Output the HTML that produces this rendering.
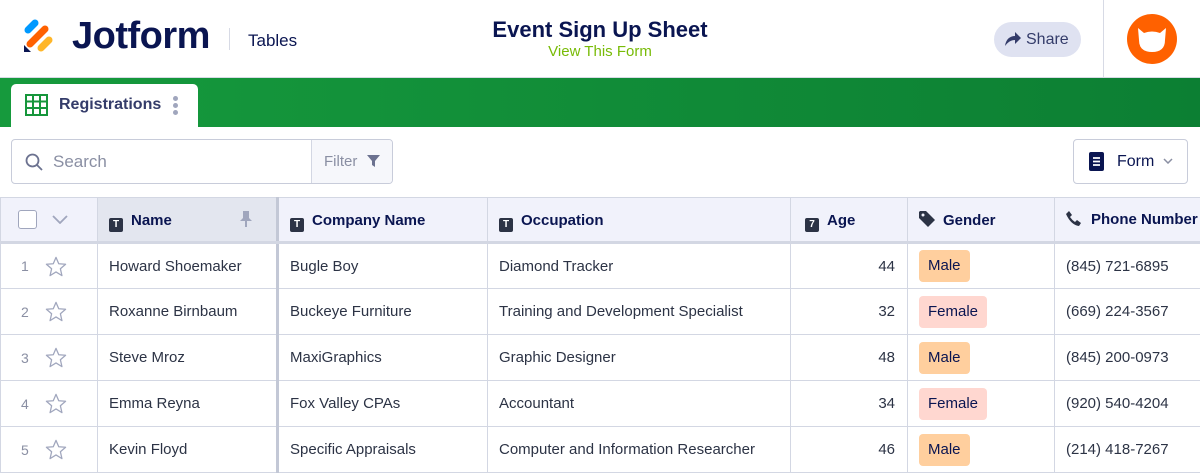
<!DOCTYPE html>
<html><head><meta charset="utf-8"><style>
*{box-sizing:border-box;margin:0;padding:0}
body{width:1200px;height:474px;overflow:hidden;background:#fff;font-family:"Liberation Sans",sans-serif;color:#0a1551;position:relative}
.hdr{position:absolute;left:0;top:0;width:1200px;height:78px;border-bottom:1px solid #d7dae5;background:#fff}
.abs{position:absolute}
.green{position:absolute;top:78px;left:0;width:1200px;height:49px;background:linear-gradient(90deg,#169a3d,#0c7f33)}
.tab{position:absolute;left:11px;top:84px;width:187px;height:43px;background:#fff;border-radius:5px 5px 0 0}
table{position:absolute;left:0;top:197px;border-collapse:collapse;table-layout:fixed;width:1210px}
td,th{border:1px solid #d3d7e3;height:46px;font-size:15px;color:#2c3345;font-weight:normal;text-align:left;padding:0 0 0 11px;white-space:nowrap;overflow:hidden;vertical-align:middle}
th{background:#f1f2fb;color:#0a1551;font-weight:bold;height:45px;border-bottom:3px solid #d3d7e3;padding-top:4px}
.ic{display:inline-block;width:14px;height:14px;background:#2c3345;color:#fff;font-size:10px;text-align:center;line-height:14px;border-radius:2px;margin-right:8px;vertical-align:-2px;font-weight:bold}
.tag{display:inline-block;padding:0 9px;height:32px;line-height:32px;border-radius:4px;color:#0a1551}
.m{background:#ffcf9e}.f{background:#ffd7d0}
.num{display:inline-block;width:12px;color:#8a8fa3;font-size:14px;vertical-align:middle}
.st{display:inline-block;margin-left:12px;vertical-align:middle}
</style></head><body>
<div class="hdr">
 <svg class="abs" style="left:20px;top:17px" width="36" height="36" viewBox="0 0 36 36">
  <path d="M8 13L15 6" stroke="#0099ff" stroke-width="7" stroke-linecap="round"/>
  <path d="M10 27L25 12" stroke="#ff6100" stroke-width="7" stroke-linecap="round"/>
  <path d="M21 31L29 23" stroke="#ffb629" stroke-width="7" stroke-linecap="round"/>
  <path d="M4 28L4 35L11 35Z" fill="#0a1551"/>
 </svg>
 <div class="abs" style="left:72px;top:15px;font-size:38px;font-weight:bold;color:#0a1551;letter-spacing:-0.5px">Jotform</div>
 <div class="abs" style="left:229px;top:28px;width:1px;height:22px;background:#d7dae5"></div>
 <div class="abs" style="left:248px;top:31px;font-size:17px;color:#0a1551">Tables</div>
 <div class="abs" style="left:450px;top:17px;width:300px;text-align:center;font-size:22px;font-weight:bold;color:#0a1551">Event Sign Up Sheet</div>
 <div class="abs" style="left:450px;top:43px;width:300px;text-align:center;font-size:15px;color:#78bb07">View This Form</div>
 <div class="abs" style="left:994px;top:22px;width:87px;height:35px;border-radius:18px;background:#dfe2f1;font-size:16px;color:#343c6a;line-height:35px;padding-left:32px">Share</div>
 <svg class="abs" style="left:1004px;top:31px" width="18" height="16" viewBox="0 0 18 16"><path d="M1 15 C2 8 6 5 11 5 V1 L17 7 L11 13 V9 C7 9 4 11 1 15Z" fill="#343c6a"/></svg>
 <div class="abs" style="left:1103px;top:0;width:1px;height:78px;background:#d7dae5"></div>
 <svg class="abs" style="left:1127px;top:14px" width="50" height="50" viewBox="0 0 50 50"><circle cx="25" cy="25" r="25" fill="#ff6100"/><path d="M11 14 L17 19 Q25 16 33 19 L39 14 L38 26 Q38 38 25 38 Q12 38 12 26Z" fill="#fff"/></svg>
</div>
<div class="green"></div>
<div class="tab">
 <svg class="abs" style="left:14px;top:10px" width="23" height="22" viewBox="0 0 23 22"><rect x="1" y="1" width="21" height="20" fill="none" stroke="#16963b" stroke-width="2"/><path d="M8 1V21M15 1V21M1 7.5H22M1 14H22" stroke="#16963b" stroke-width="2"/></svg>
 <div class="abs" style="left:48px;top:12px;font-size:16px;font-weight:bold;color:#343c6a">Registrations</div>
 <div class="abs" style="left:162px;top:12px;width:5px;font-size:0">
  <div style="width:5px;height:5px;border-radius:50%;background:#a0a6bd;margin-bottom:2px"></div><div style="width:5px;height:5px;border-radius:50%;background:#a0a6bd;margin-bottom:2px"></div><div style="width:5px;height:5px;border-radius:50%;background:#a0a6bd"></div>
 </div>
</div>
<div class="abs" style="left:11px;top:139px;width:382px;height:45px;border:1px solid #c8ccda;border-radius:4px;overflow:hidden">
 <svg class="abs" style="left:13px;top:13px" width="18" height="18" viewBox="0 0 18 18"><circle cx="7.5" cy="7.5" r="6" fill="none" stroke="#6c7290" stroke-width="1.8"/><path d="M12 12L17 17" stroke="#6c7290" stroke-width="1.8"/></svg>
 <div class="abs" style="left:41px;top:12px;font-size:17px;color:#8a8fa3">Search</div>
 <div class="abs" style="left:299px;top:0;width:82px;height:43px;background:#f6f7fb;border-left:1px solid #d3d7e3;font-size:15px;color:#8a8fa3;line-height:43px;padding-left:12px">Filter</div>
 <svg class="abs" style="left:355px;top:15px" width="13" height="13" viewBox="0 0 13 13"><path d="M0 0H13L8 6V12L5 10V6Z" fill="#6c7290"/></svg>
</div>
<div class="abs" style="left:1073px;top:139px;width:115px;height:45px;border:1px solid #c8ccda;border-radius:4px">
 <svg class="abs" style="left:15px;top:12px" width="15" height="19" viewBox="0 0 15 19"><rect width="15" height="19" rx="2" fill="#0a1551"/><path d="M4 6H11M4 9.5H11M4 13H11" stroke="#fff" stroke-width="1.8"/></svg>
 <div class="abs" style="left:43px;top:13px;font-size:16px;color:#0a1551">Form</div>
 <svg class="abs" style="left:89px;top:18px" width="10" height="6" viewBox="0 0 10 6"><path d="M1 1L5 5L9 1" fill="none" stroke="#8a8fa3" stroke-width="1.5"/></svg>
</div>
<svg class="abs" style="left:240px;top:211px;z-index:2" width="12" height="16" viewBox="0 0 12 16"><path d="M3 0H9V7L12 10H7V16H5V10H0L3 7Z" fill="#a0a6bd"/></svg>
<table>
<colgroup><col style="width:97px"><col style="width:180px"><col style="width:210px"><col style="width:303px"><col style="width:117px"><col style="width:147px"><col style="width:156px"></colgroup>
<tr><th style="padding-left:17px;padding-top:0"><span style="display:inline-block;width:19px;height:19px;border:1.5px solid #a0a6bd;border-radius:3px;background:#fff;vertical-align:middle"></span><svg style="margin-left:15px;vertical-align:middle" width="16" height="9" viewBox="0 0 16 9"><path d="M1 1L8 8L15 1" fill="none" stroke="#a0a6bd" stroke-width="1.8"/></svg></th>
<th style="background:#e3e6ef;border-right:3px solid #c3c8d6"><span class="ic">T</span>Name</th>
<th><span class="ic">T</span>Company Name</th><th><span class="ic">T</span>Occupation</th><th style="padding-left:14px"><span class="ic">7</span>Age</th>
<th style="padding-top:0"><svg style="margin-right:8px;vertical-align:-2px" width="16" height="16" viewBox="0 0 16 16"><path d="M0 1V7L9 16L16 9L7 0H1Z" fill="#2c3345"/><circle cx="4" cy="4" r="1.5" fill="#f1f2fb"/></svg>Gender</th>
<th style="padding-top:0"><svg style="margin-right:10px;vertical-align:-2px" width="15" height="15" viewBox="0 0 15 15"><path d="M3 0L6 4L4 6Q6 9 9 11L11 9L15 12L13 15Q5 14 0 3Z" fill="#2c3345"/></svg>Phone Number</th></tr>
<tr><td style="padding-left:20px"><span class="num">1</span><svg class="st" width="22" height="21" viewBox="0 0 24 23"><path d="M12 1.5L15 8.5L22.5 9L16.8 14L18.5 21.5L12 17.5L5.5 21.5L7.2 14L1.5 9L9 8.5Z" fill="none" stroke="#a0a6bd" stroke-width="1.4" stroke-linejoin="round"/></svg></td><td style="border-right:3px solid #c3c8d6">Howard Shoemaker</td><td>Bugle Boy</td><td>Diamond Tracker</td><td style="text-align:right;padding-right:12px">44</td><td><span class="tag m">Male</span></td><td>(845) 721-6895</td></tr>
<tr><td style="padding-left:20px"><span class="num">2</span><svg class="st" width="22" height="21" viewBox="0 0 24 23"><path d="M12 1.5L15 8.5L22.5 9L16.8 14L18.5 21.5L12 17.5L5.5 21.5L7.2 14L1.5 9L9 8.5Z" fill="none" stroke="#a0a6bd" stroke-width="1.4" stroke-linejoin="round"/></svg></td><td style="border-right:3px solid #c3c8d6">Roxanne Birnbaum</td><td>Buckeye Furniture</td><td>Training and Development Specialist</td><td style="text-align:right;padding-right:12px">32</td><td><span class="tag f">Female</span></td><td>(669) 224-3567</td></tr>
<tr><td style="padding-left:20px"><span class="num">3</span><svg class="st" width="22" height="21" viewBox="0 0 24 23"><path d="M12 1.5L15 8.5L22.5 9L16.8 14L18.5 21.5L12 17.5L5.5 21.5L7.2 14L1.5 9L9 8.5Z" fill="none" stroke="#a0a6bd" stroke-width="1.4" stroke-linejoin="round"/></svg></td><td style="border-right:3px solid #c3c8d6">Steve Mroz</td><td>MaxiGraphics</td><td>Graphic Designer</td><td style="text-align:right;padding-right:12px">48</td><td><span class="tag m">Male</span></td><td>(845) 200-0973</td></tr>
<tr><td style="padding-left:20px"><span class="num">4</span><svg class="st" width="22" height="21" viewBox="0 0 24 23"><path d="M12 1.5L15 8.5L22.5 9L16.8 14L18.5 21.5L12 17.5L5.5 21.5L7.2 14L1.5 9L9 8.5Z" fill="none" stroke="#a0a6bd" stroke-width="1.4" stroke-linejoin="round"/></svg></td><td style="border-right:3px solid #c3c8d6">Emma Reyna</td><td>Fox Valley CPAs</td><td>Accountant</td><td style="text-align:right;padding-right:12px">34</td><td><span class="tag f">Female</span></td><td>(920) 540-4204</td></tr>
<tr><td style="padding-left:20px"><span class="num">5</span><svg class="st" width="22" height="21" viewBox="0 0 24 23"><path d="M12 1.5L15 8.5L22.5 9L16.8 14L18.5 21.5L12 17.5L5.5 21.5L7.2 14L1.5 9L9 8.5Z" fill="none" stroke="#a0a6bd" stroke-width="1.4" stroke-linejoin="round"/></svg></td><td style="border-right:3px solid #c3c8d6">Kevin Floyd</td><td>Specific Appraisals</td><td>Computer and Information Researcher</td><td style="text-align:right;padding-right:12px">46</td><td><span class="tag m">Male</span></td><td>(214) 418-7267</td></tr>
</table>
</body></html>
